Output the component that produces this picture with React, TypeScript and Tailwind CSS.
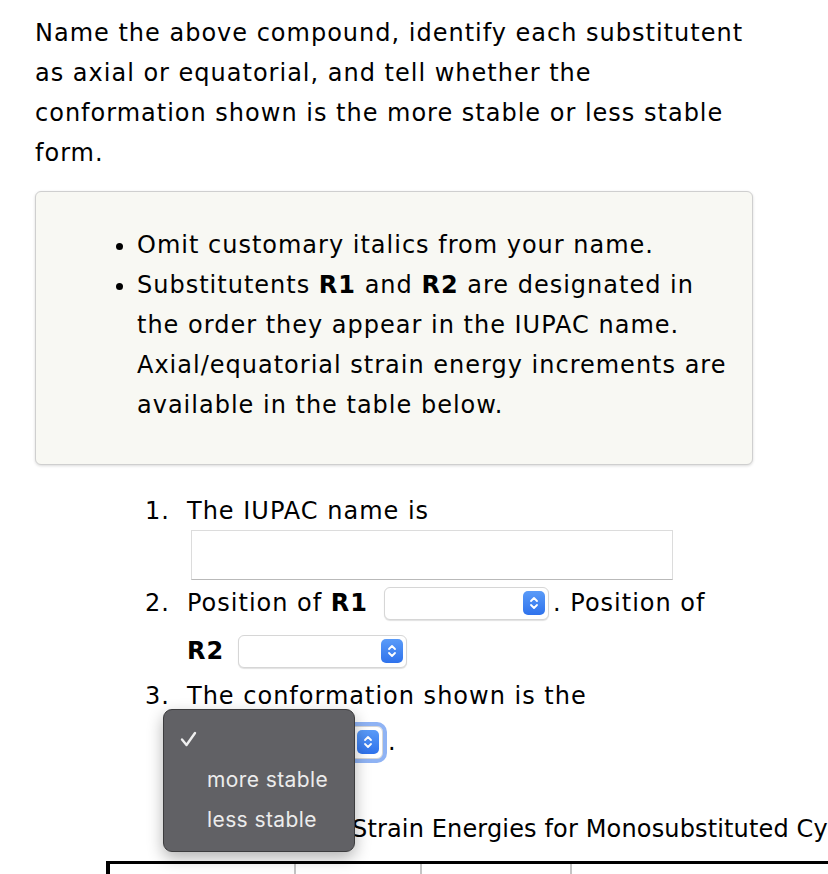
import React from 'react';

function Arrows() {
  return (
    <span className="flex h-[24px] w-[22px] items-center justify-center rounded-[5px] bg-gradient-to-b from-[#5a9bf8] to-[#2f72ec]">
      <svg width="10" height="14" viewBox="0 0 10 14" fill="none" stroke="white" strokeWidth="1.8" strokeLinecap="round" strokeLinejoin="round">
        <path d="M2 5 L5 2 L8 5" />
        <path d="M2 9 L5 12 L8 9" />
      </svg>
    </span>
  );
}

function Select({ width, focused }: { width: string; focused?: boolean }) {
  return (
    <span
      className={
        'inline-flex h-[33px] items-center justify-end rounded-[6px] border border-[#d6d6d6] bg-white pr-[3px] shadow-[0_1px_1px_rgba(0,0,0,0.12)] ' +
        width +
        (focused ? ' outline outline-[4px] outline-[#8fb3f4]' : '')
      }
    >
      <Arrows />
    </span>
  );
}

export default function App() {
  return (
    <div className="relative h-[874px] w-[828px] overflow-hidden bg-white font-['DejaVu_Sans',Verdana,sans-serif] text-[24px] leading-[40px] tracking-[1px] text-black">
      <div className="pl-[35px] pt-[13px]">
        <p className="whitespace-nowrap">
          Name the above compound, identify each substitutent
          <br />
          as axial or equatorial, and tell whether the
          <br />
          conformation shown is the more stable or less stable
          <br />
          form.
        </p>

        <div className="mt-[18px] w-[718px] rounded-[6px] border border-[#cfcfcf] bg-[#f8f8f3] pb-[39px] pt-[33px] shadow-[0_1px_3px_rgba(0,0,0,0.15)]">
          <ul className="list-disc whitespace-nowrap pl-[101px]">
            <li>Omit customary italics from your name.</li>
            <li>
              Substitutents <b>R1</b> and <b>R2</b> are designated in
              <br />
              the order they appear in the IUPAC name.
              <br />
              Axial/equatorial strain energy increments are
              <br />
              available in the table below.
            </li>
          </ul>
        </div>

        <div className="whitespace-nowrap">
          <div className="mt-[26px] flex h-[40px] items-center">
            <span className="w-[152px] pl-[110px]">1.</span>
            <span>The IUPAC name is</span>
          </div>
          <div className="ml-[156px] mt-[-1px] h-[50px] w-[482px] border border-[#dcdcdc] border-b-[#b9b9b9] bg-white" />

          <div className="mt-[3px] flex h-[40px] items-center">
            <span className="w-[152px] pl-[110px]">2.</span>
            <span>
              Position of <b>R1</b>
            </span>
            <span className="ml-[16px] flex">
              <Select width="w-[165px]" />
            </span>
            <span className="ml-[4px]">. Position of</span>
          </div>
          <div className="mt-[8px] flex h-[40px] items-center pl-[152px]">
            <b>R2</b>
            <span className="ml-[14px] flex">
              <Select width="w-[169px]" />
            </span>
          </div>

          <div className="mt-[5px] flex h-[40px] items-center">
            <span className="w-[152px] pl-[110px]">3.</span>
            <span>The conformation shown is the</span>
          </div>
          <div className="mt-[6px] flex h-[40px] items-center pl-[156px]">
            <Select width="w-[192px]" focused />
            <span className="ml-[5px]">.</span>
          </div>

          <div className="mt-[47px] flex h-[40px] items-center pl-[317px] tracking-[0.15px]">Strain Energies for Monosubstituted Cyclohexanes</div>

          <div className="ml-[71px] mt-[12px] flex h-[40px] w-[1000px] border-l-[4px] border-t-[3px] border-black">
            <div className="w-[186px] border-r-2 border-[#c4c4c4]" />
            <div className="w-[126px] border-r-2 border-[#c4c4c4]" />
            <div className="w-[150px] border-r-2 border-[#c4c4c4]" />
          </div>
        </div>
      </div>

      <div className="absolute left-[163px] top-[709px] h-[143px] w-[192px] rounded-[9px] border border-[#3c3c3e] bg-[#616165] font-['Inter','Noto_Sans',sans-serif] text-[21px] leading-[40px] tracking-[0.4px] text-[#ececec] shadow-[0_6px_16px_rgba(0,0,0,0.3)]">
        <div className="flex h-[40px] items-center pl-[16px] pt-[18px]">
          <svg width="17" height="16" viewBox="0 0 17 16" fill="none" stroke="#efefef" strokeWidth="2.4" strokeLinecap="round" strokeLinejoin="round">
            <path d="M2 8.5 L6.5 14 L15 2" />
          </svg>
        </div>
        <div className="mt-[10px] pl-[43px]">more stable</div>
        <div className="pl-[43px]">less stable</div>
      </div>
    </div>
  );
}
